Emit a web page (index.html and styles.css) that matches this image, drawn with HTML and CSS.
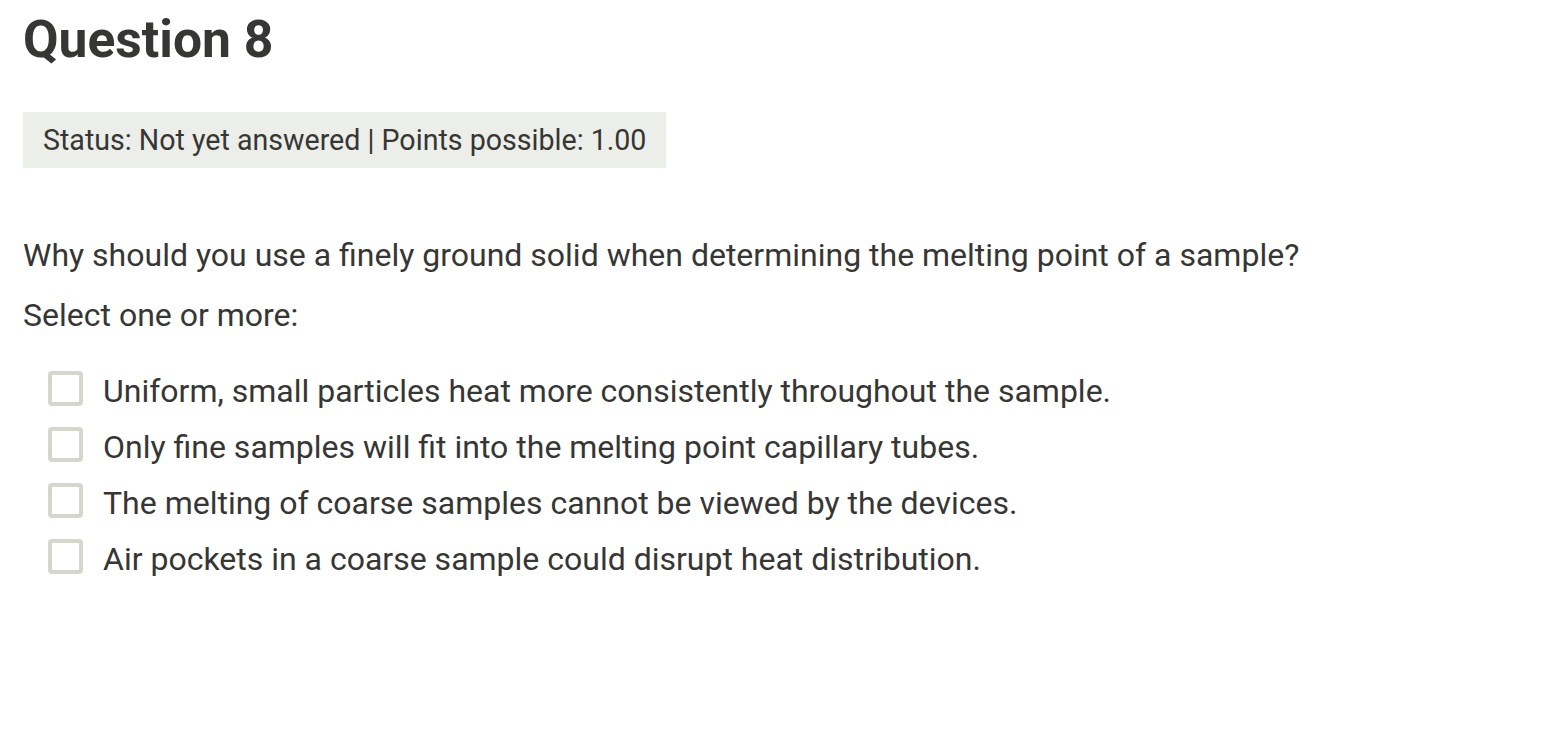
FILE: index.html
```html
<!DOCTYPE html>
<html>
<head>
<meta charset="utf-8">
<link rel="stylesheet" href="styles.css">
</head>
<body>
<div class="question">
  <h1 class="title">Question 8</h1>
  <div class="status">Status: Not yet answered | Points possible: 1.00</div>
  <p class="prompt">Why should you use a finely ground solid when determining the melting point of a sample?</p>
  <p class="select">Select one or more:</p>
  <ul class="options">
    <li class="option"><span class="box"></span><span>Uniform, small particles heat more consistently throughout the sample.</span></li>
    <li class="option"><span class="box"></span><span>Only fine samples will fit into the melting point capillary tubes.</span></li>
    <li class="option"><span class="box"></span><span>The melting of coarse samples cannot be viewed by the devices.</span></li>
    <li class="option"><span class="box"></span><span>Air pockets in a coarse sample could disrupt heat distribution.</span></li>
  </ul>
</div>
</body>
</html>
```
FILE: styles.css
```css
html, body {
  margin: 0;
  padding: 0;
  background: #ffffff;
}
body {
  font-family: Roboto, "Liberation Sans", sans-serif;
  color: #363634;
}
.question {
  padding: 12px 23px;
}
.title {
  margin: 0;
  font-size: 51.6px;
  font-weight: 700;
  line-height: 56px;
}
.status {
  display: inline-block;
  margin-top: 44px;
  background: #eceee9;
  font-size: 28.6px;
  line-height: 56px;
  padding: 0 20px;
}
.prompt {
  margin: 62px 0 0;
  font-size: 32px;
  line-height: 50px;
}
.select {
  margin: 10px 0 0;
  font-size: 32px;
  line-height: 50px;
}
.options {
  list-style: none;
  margin: 23px 0 0;
  padding: 0 0 0 25px;
}
.option {
  display: flex;
  align-items: center;
  gap: 20px;
  font-size: 32px;
  height: 56px;
}
.box {
  box-sizing: border-box;
  width: 35px;
  height: 35px;
  margin-bottom: 5px;
  border: 4px solid #d6d7cc;
  border-radius: 4px;
  flex: none;
}
```
